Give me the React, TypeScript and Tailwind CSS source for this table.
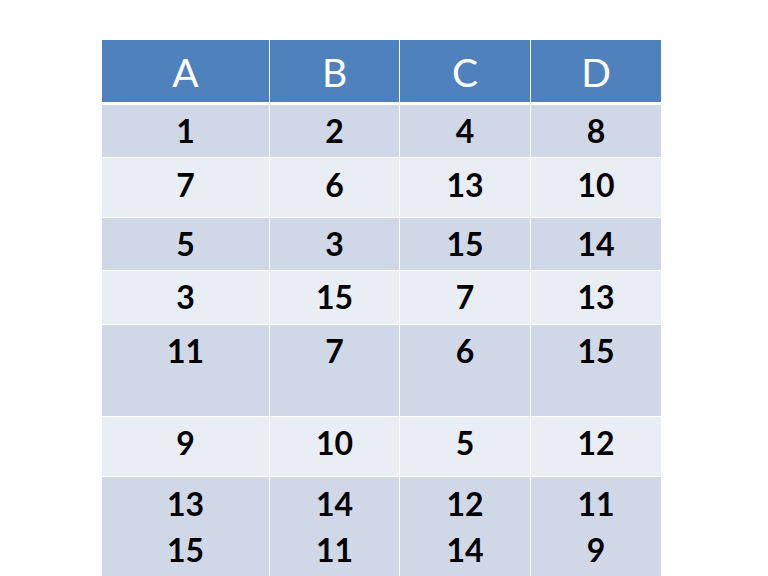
import React from "react";

const headers = ["A", "B", "C", "D"];
const rows: { cells: string[][]; h: string; bg: string; pt: string }[] = [
  { cells: [["1"], ["2"], ["4"], ["8"]], h: "h-[52px]", bg: "bg-[#D0D8E8]", pt: "pt-[3px]" },
  { cells: [["7"], ["6"], ["13"], ["10"]], h: "h-[59px]", bg: "bg-[#E9EDF4]", pt: "pt-[4px]" },
  { cells: [["5"], ["3"], ["15"], ["14"]], h: "h-[52px]", bg: "bg-[#D0D8E8]", pt: "pt-[3px]" },
  { cells: [["3"], ["15"], ["7"], ["13"]], h: "h-[53px]", bg: "bg-[#E9EDF4]", pt: "pt-[3px]" },
  { cells: [["11"], ["7"], ["6"], ["15"]], h: "h-[91px]", bg: "bg-[#D0D8E8]", pt: "pt-[3px]" },
  { cells: [["9"], ["10"], ["5"], ["12"]], h: "h-[59px]", bg: "bg-[#E9EDF4]", pt: "pt-[3px]" },
  { cells: [["13", "15"], ["14", "11"], ["12", "14"], ["11", "9"]], h: "h-[120px]", bg: "bg-[#D0D8E8]", pt: "pt-[4px]" },
];

export default function App() {
  return (
    <div className="w-[768px] h-[576px] overflow-hidden bg-white pt-[40px] pl-[102px]" style={{ fontFamily: "Lato, 'Open Sans', sans-serif" }}>
      <div className="w-[559px] flex flex-col">
        <div className="grid grid-cols-[167px_129px_130px_130px] gap-x-px h-[62px] bg-white">
          {headers.map((h) => (
            <div key={h} className="bg-[#4F81BD] flex items-center justify-center text-white text-[39px] font-normal leading-none pt-[2px]">
              {h}
            </div>
          ))}
        </div>
        <div className="h-[3px]" />
        <div className="flex flex-col gap-y-px">
          {rows.map((r, i) => (
            <div key={i} className={`grid grid-cols-[167px_129px_130px_130px] gap-x-px ${r.h}`}>
              {r.cells.map((c, j) => (
                <div key={j} className={`${r.bg} ${r.pt} flex flex-col items-center text-black font-bold text-[32px] leading-[46px]`}>
                  {c.map((t, k) => (
                    <span key={k}>{t}</span>
                  ))}
                </div>
              ))}
            </div>
          ))}
        </div>
      </div>
    </div>
  );
}
